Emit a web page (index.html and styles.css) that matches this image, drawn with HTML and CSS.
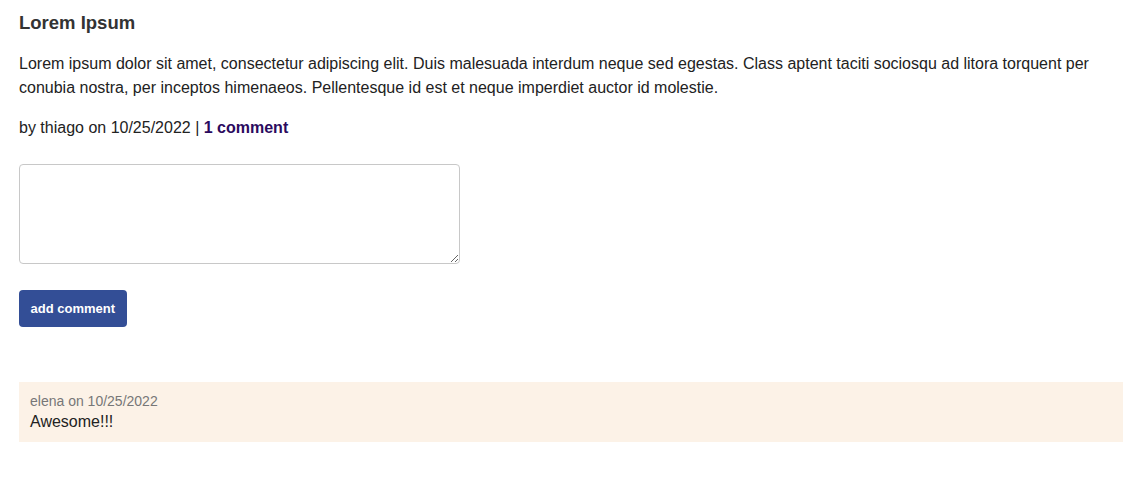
FILE: index.html
```html
<!DOCTYPE html>
<html lang="en">
<head>
<meta charset="UTF-8" />
<title>Lorem Ipsum</title>
<link rel="stylesheet" href="styles.css">
</head>
<body>

<div class="post">
  <h2 class="post-title">Lorem Ipsum</h2>
  <p class="post-body">Lorem ipsum dolor sit amet, consectetur adipiscing elit. Duis malesuada interdum neque sed egestas. Class aptent taciti sociosqu ad litora torquent per conubia nostra, per inceptos himenaeos. Pellentesque id est et neque imperdiet auctor id molestie.</p>
  <p class="post-meta">by thiago on 10/25/2022 | <a href="#comments">1 comment</a></p>

  <form class="comment-form">
    <textarea name="comment"></textarea>
    <button type="submit">add comment</button>
  </form>

  <div id="comments" class="comments">
    <div class="comment">
      <div class="comment-meta">elena on 10/25/2022</div>
      <div class="comment-text">Awesome!!!</div>
    </div>
  </div>
</div>

</body>
</html>
```

FILE: styles.css
```css
body { margin: 0; padding: 0 18px 0 19px; font-family: "Liberation Sans", Arial, sans-serif; font-size: 16px; color: #222; background: #fff; }
.post-title { font-size: 18.5px; font-weight: bold; color: #333; margin: 12px 0 0; line-height: 22px; }
.post-body { margin: 18px 0 0; line-height: 24px; }
.post-meta { margin: 16px 0 0; line-height: 24px; }
.post-meta a { color: #2b0a5e; font-weight: bold; text-decoration: none; }
.comment-form { margin-top: 24px; display: flex; flex-direction: column; align-items: flex-start; gap: 26px; }
.comment-form textarea { width: 441px; height: 100px; box-sizing: border-box; border: 1px solid #c8c8c8; border-radius: 4px; padding: 6px; font-family: inherit; font-size: 14px; margin: 0; }
.comment-form button { background: #334e96; color: #fff; border: 0; border-radius: 4px; font-family: inherit; font-size: 13px; font-weight: bold; height: 37px; padding: 0 11.5px; cursor: pointer; }
.comments { margin-top: 55px; }
.comment { background: #fcf2e7; padding: 9px 11px 9px; }
.comment-meta { font-size: 14px; color: #777; line-height: 20px; }
.comment-text { font-size: 16px; line-height: 22px; color: #222; }
```
